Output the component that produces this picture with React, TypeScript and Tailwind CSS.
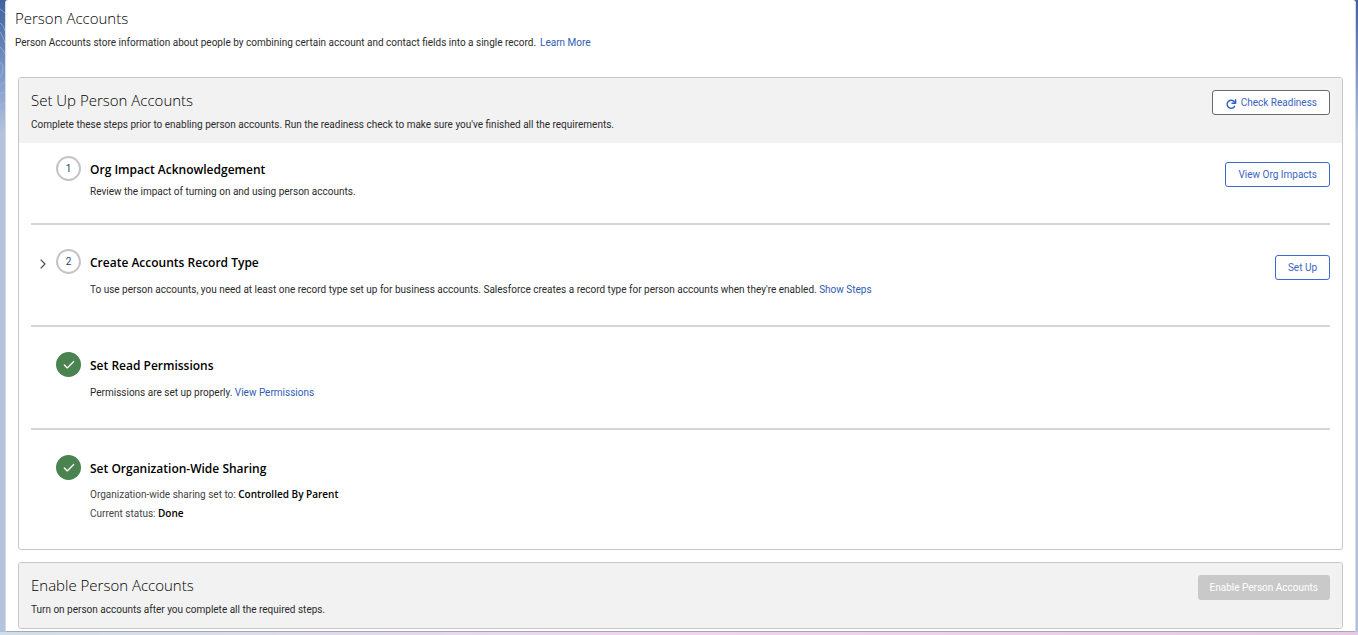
import type { ReactNode } from 'react';
import { Check, ChevronRight } from 'lucide-react';

const outlineButton =
  'flex h-[25px] shrink-0 items-center rounded-[3px] border bg-white px-3 pt-px text-[10px] text-[#3a63c0]';

function RefreshIcon() {
  return (
    <svg viewBox="0 0 12 12" className="mt-px mr-1 size-3" fill="none" aria-hidden="true">
      <path d="M9.6 8.3A4 4 0 1 1 8.6 3.1" stroke="#2f5fc4" strokeWidth="1.4" strokeLinecap="round" />
      <path d="M10.6 1.6V5.2H7" stroke="#2f5fc4" strokeWidth="1.4" strokeLinecap="round" strokeLinejoin="round" />
      <path d="M8.6 3.1L10 4.6" stroke="#2f5fc4" strokeWidth="1.4" />
    </svg>
  );
}

// contour lines that show through beside the panel
function BackdropLines({ className }: { className: string }) {
  return (
    <svg viewBox="0 0 5 140" className={className} fill="none" stroke="#a9bde0" strokeOpacity="0.6" aria-hidden="true">
      <path d="M0 9L5 13M0 23Q4 25 5 31M0 32Q3 36 5 43M0 47Q3 49 5 54" />
      <path d="M0 62Q4 65 3 70Q2 75 0 77M0 85Q4 84 5 81M0 94L5 92M0 105L5 103M0 114L5 112M0 121L5 120" />
    </svg>
  );
}

function TextLink({ children }: { children: ReactNode }) {
  return (
    <a href="#" className="text-[#2f5cb5] hover:underline">
      {children}
    </a>
  );
}

function Strong({ children }: { children: ReactNode }) {
  return <strong className="font-['Open_Sans',sans-serif] font-semibold text-black">{children}</strong>;
}

function CardHeader({ title, text, action }: { title: string; text: string; action: ReactNode }) {
  return (
    <header className="flex items-start justify-between bg-[#f2f2f2] px-3 pt-2.5 pb-2.5">
      <div>
        <h2 className="font-['Open_Sans',sans-serif] text-[15px] leading-6 font-light text-black">{title}</h2>
        <p className="mt-[5px]">{text}</p>
      </div>
      {action}
    </header>
  );
}

interface StepProps {
  title: string;
  number?: number;
  expandable?: boolean;
  action?: ReactNode;
  className: string;
  children: ReactNode;
}

function Step({ title, number, expandable, action, className, children }: StepProps) {
  return (
    <li className={`flex items-start border-[#d6d6d6] ${className}`}>
      <div className="flex h-[25px] w-[25px] shrink-0 items-center pt-1 pl-1">
        {expandable && (
          <button type="button" aria-label="Expand step">
            <ChevronRight className="size-4 text-[#555]" strokeWidth={1.75} />
          </button>
        )}
      </div>
      {number ? (
        <span className="flex size-[25px] shrink-0 items-center justify-center rounded-full border-2 border-[#c4c4c4] text-[10px] text-[#24466b]">
          {number}
        </span>
      ) : (
        <span className="flex size-[25px] shrink-0 items-center justify-center rounded-full bg-[#4a8350]">
          <Check className="size-3.5 text-white" strokeWidth={2.25} />
        </span>
      )}
      <div className="min-w-0 flex-1 pl-[9px]">
        <h3 className="pt-0.5 font-['Open_Sans',sans-serif] text-[12px] leading-6 font-semibold text-black">{title}</h3>
        {children}
      </div>
      {action}
    </li>
  );
}

export default function App() {
  return (
    <div className="min-h-screen bg-linear-to-r from-[#cfdfe8] via-[#f0d5f3] to-[#e6c9e6] pb-1 font-[Roboto,'Open_Sans',sans-serif] text-[10px] leading-4 text-[#2b2b2b]">
      <div className="relative bg-linear-to-b from-[#3f629f] from-0% via-[#8aa2d0] via-14% to-[#b4c2de] to-21% pr-0.5 pl-[5px]">
        <BackdropLines className="absolute top-0 left-0 h-[140px] w-[5px]" />
        <main className="relative rounded-t-[3px] border-x border-b border-x-[#d8dbe2] border-b-[#a9a6b5] bg-white px-3 pt-1.5 pb-0.5">
          <div className="-ml-[3px]">
            <h1 className="font-['Open_Sans',sans-serif] text-[15px] leading-6 font-light text-black">Person Accounts</h1>
            <p className="mt-[5px]">
              Person Accounts store information about people by combining certain account and contact fields into a single record.
              <span className="ml-1">
                <TextLink>Learn More</TextLink>
              </span>
            </p>
          </div>

          <section className="mt-[26px] overflow-hidden rounded-[3px] border border-[#c6c6c6]">
            <CardHeader
              title="Set Up Person Accounts"
              text="Complete these steps prior to enabling person accounts. Run the readiness check to make sure you've finished all the requirements."
              action={
                <button type="button" className={`${outlineButton} mt-0.5 border-[#6b6b6b]`}>
                  <RefreshIcon />
                  Check Readiness
                </button>
              }
            />
            <ol className="px-3">
              <Step
                number={1}
                title="Org Impact Acknowledgement"
                className="h-[82px] border-b-2 pt-[13px]"
                action={
                  <button type="button" className={`${outlineButton} mt-1.5 border-[#3a6bd0]`}>
                    View Org Impacts
                  </button>
                }
              >
                <p className="mt-0.5">Review the impact of turning on and using person accounts.</p>
              </Step>
              <Step
                number={2}
                expandable
                title="Create Accounts Record Type"
                className="h-[102px] border-b-2 pt-6"
                action={
                  <button type="button" className={`${outlineButton} mt-1.5 border-[#3a6bd0]`}>
                    Set Up
                  </button>
                }
              >
                <p className="mt-[7px]">
                  To use person accounts, you need at least one record type set up for business accounts. Salesforce creates a record type for person accounts when they're enabled.{' '}
                  <TextLink>Show Steps</TextLink>
                </p>
              </Step>
              <Step title="Set Read Permissions" className="h-[103px] border-b-2 pt-[25px]">
                <p className="mt-[7px]">
                  Permissions are set up properly. <TextLink>View Permissions</TextLink>
                </p>
              </Step>
              <Step title="Set Organization-Wide Sharing" className="h-[119px] pt-[25px]">
                <div className="mt-1 leading-[18px] text-[#444]">
                  <p>
                    Organization-wide sharing set to: <Strong>Controlled By Parent</Strong>
                  </p>
                  <p>
                    Current status: <Strong>Done</Strong>
                  </p>
                </div>
              </Step>
            </ol>
          </section>

          <section className="mt-3 overflow-hidden rounded-[3px] border border-[#c6c6c6]">
            <CardHeader
              title="Enable Person Accounts"
              text="Turn on person accounts after you complete all the required steps."
              action={
                <button type="button" disabled className="mt-0.5 h-[25px] shrink-0 rounded-[3px] bg-[#c9c9c9] px-3 pt-px text-[10px] text-white">
                  Enable Person Accounts
                </button>
              }
            />
          </section>
        </main>
      </div>
    </div>
  );
}
